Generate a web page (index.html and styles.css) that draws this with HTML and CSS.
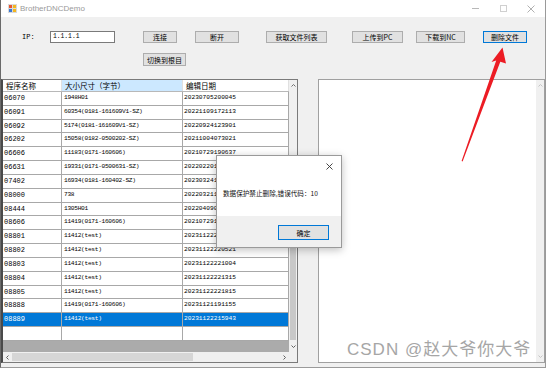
FILE: index.html
```html
<!DOCTYPE html>
<html lang="zh-CN">
<head>
    <meta charset="UTF-8">
    <title>BrotherDNCDemo</title>
    <link rel="stylesheet" href="styles.css">
</head>
<body>
    <div class="window">
        <div class="titlebar">
            <svg class="app-icon" viewBox="0 0 9 9">
                <rect x="0" y="0" width="9" height="9" fill="#d9d9d9"/>
                <rect x="1" y="1" width="3" height="3" fill="#e8542f"/>
                <rect x="5" y="1" width="3" height="3" fill="#f3b61f"/>
                <rect x="1" y="5" width="3" height="3" fill="#3a78d4"/>
                <rect x="5" y="5" width="3" height="3" fill="#f3b61f"/>
            </svg>
            <span class="title">BrotherDNCDemo</span>
            <div class="controls">
                <div class="ctrl"><svg width="7" height="7" viewBox="0 0 7 7"><path d="M0 3.5H7" stroke="#b8b8b8" stroke-width="1"/></svg></div>
                <div class="ctrl"><svg width="7" height="7" viewBox="0 0 7 7"><rect x="0.5" y="0.5" width="6" height="6" fill="none" stroke="#d0d0d0" stroke-width="1"/></svg></div>
                <div class="ctrl"><svg width="8" height="8" viewBox="0 0 8 8"><path d="M0.5 0.5L7.5 7.5M7.5 0.5L0.5 7.5" stroke="#b0b0b0" stroke-width="1"/></svg></div>
            </div>
        </div>

        <div class="client">
            <div class="toolbar">
                <span class="ip-label">IP:</span>
                <div class="ip-input">1.1.1.1</div>
                <button class="btn btn-connect">连接</button>
                <button class="btn btn-disconnect">断开</button>
                <button class="btn btn-list">获取文件列表</button>
                <button class="btn btn-upload">上传到PC</button>
                <button class="btn btn-download">下载到NC</button>
                <button class="btn btn-delete">删除文件</button>
            </div>
            <div class="toolbar toolbar-second">
                <button class="btn btn-root">切换到根目</button>
            </div>

            <div class="main">
                <div class="grid">
                    <div class="grid-area">
                        <div class="grid-header">
                            <div class="hcell">程序名称</div>
                            <div class="hcell hcell-active">大小尺寸（字节）</div>
                            <div class="hcell">编辑日期</div>
                        </div>
                        <div class="grid-row"><div class="c1">06070</div><div class="c2">1948H01</div><div class="c3">20230705200045</div></div>
                        <div class="grid-row"><div class="c1">06091</div><div class="c2">60354(0181-161609V1-SZ)</div><div class="c3">20221109172113</div></div>
                        <div class="grid-row"><div class="c1">06092</div><div class="c2">5174(0181-161609V1-SZ)</div><div class="c3">20220924123901</div></div>
                        <div class="grid-row"><div class="c1">06202</div><div class="c2">15058(0182-0500202-SZ)</div><div class="c3">20211004073021</div></div>
                        <div class="grid-row"><div class="c1">06606</div><div class="c2">11183(0171-160606)</div><div class="c3">20210729190637</div></div>
                        <div class="grid-row"><div class="c1">06631</div><div class="c2">19331(0171-0500631-SZ)</div><div class="c3">20220220183012</div></div>
                        <div class="grid-row"><div class="c1">07402</div><div class="c2">16934(0181-160402-SZ)</div><div class="c3">20230324101522</div></div>
                        <div class="grid-row"><div class="c1">08000</div><div class="c2">738</div><div class="c3">20220321114530</div></div>
                        <div class="grid-row"><div class="c1">08444</div><div class="c2">1305H01</div><div class="c3">20220409093318</div></div>
                        <div class="grid-row"><div class="c1">08606</div><div class="c2">11419(0171-160606)</div><div class="c3">20210729190811</div></div>
                        <div class="grid-row"><div class="c1">08801</div><div class="c2">11412(test)</div><div class="c3">20231122215302</div></div>
                        <div class="grid-row"><div class="c1">08802</div><div class="c2">11412(test)</div><div class="c3">20231122220521</div></div>
                        <div class="grid-row"><div class="c1">08803</div><div class="c2">11412(test)</div><div class="c3">20231122221004</div></div>
                        <div class="grid-row"><div class="c1">08804</div><div class="c2">11412(test)</div><div class="c3">20231122221315</div></div>
                        <div class="grid-row"><div class="c1">08805</div><div class="c2">11412(test)</div><div class="c3">20231122221815</div></div>
                        <div class="grid-row"><div class="c1">08888</div><div class="c2">11419(0171-160606)</div><div class="c3">20231121191155</div></div>
                        <div class="grid-row grid-row-selected"><div class="c1">08889</div><div class="c2">11412(test)</div><div class="c3">20231122215943</div></div>
                        <div class="grid-row"><div class="c1"></div><div class="c2"></div><div class="c3"></div></div>
                        <div class="grid-band"></div>
                    </div>

                    <div class="vscroll">
                        <div class="sarrow sarrow-v"><svg width="5" height="3" viewBox="0 0 5 3"><path d="M0.5 2.5L2.5 0.5L4.5 2.5" stroke="#707070" fill="none"/></svg></div>
                        <div class="vtrack"><div class="vthumb"></div></div>
                        <div class="sarrow sarrow-v sarrow-down"><svg width="5" height="3" viewBox="0 0 5 3"><path d="M0.5 0.5L2.5 2.5L4.5 0.5" stroke="#606060" fill="none"/></svg></div>
                    </div>

                    <div class="hscroll">
                        <div class="sarrow sarrow-h"><svg width="3" height="5" viewBox="0 0 3 5"><path d="M2.5 0.5L0.5 2.5L2.5 4.5" stroke="#606060" fill="none"/></svg></div>
                        <div class="hthumb"></div>
                        <div class="htrack"></div>
                        <div class="sarrow sarrow-h"><svg width="3" height="5" viewBox="0 0 3 5"><path d="M0.5 0.5L2.5 2.5L0.5 4.5" stroke="#606060" fill="none"/></svg></div>
                    </div>
                    <div class="corner"></div>
                </div>

                <div class="textbox">
                    <div class="textbox-scroll">
                        <svg width="5" height="3" viewBox="0 0 5 3"><path d="M0.5 2.5L2.5 0.5L4.5 2.5" stroke="#c4c4c4" fill="none"/></svg>
                        <svg width="5" height="3" viewBox="0 0 5 3"><path d="M0.5 0.5L2.5 2.5L4.5 0.5" stroke="#c4c4c4" fill="none"/></svg>
                    </div>
                </div>
            </div>
        </div>
    </div>

    <div class="dialog">
        <div class="dialog-body">
            <div class="dialog-close"><svg width="7" height="7" viewBox="0 0 7 7"><path d="M0.5 0.5L6.5 6.5M6.5 0.5L0.5 6.5" stroke="#333" stroke-width="0.9"/></svg></div>
            <div class="dialog-msg">数据保护禁止删除,错误代码：10</div>
        </div>
        <div class="dialog-footer">
            <button class="btn btn-ok">确定</button>
        </div>
    </div>

    <svg class="arrow" viewBox="0 0 554 369">
        <polygon points="502.5,47.5 506,63.5 500.3,61.8 462.6,161.5 461.6,161 496.2,60.5 491.5,62" fill="#ec1c24"/>
    </svg>

    <div class="watermark">CSDN @赵大爷你大爷</div>
</body>
</html>
```

FILE: styles.css
```css
body {
    margin: 0;
    width: 554px;
    height: 369px;
    position: relative;
    overflow: hidden;
    background: #ffffff;
    font-family: "Liberation Sans", "Noto Sans CJK SC", sans-serif;
    color: #000;
}

.window {
    width: 546px;
    height: 368px;
    box-sizing: border-box;
    border-left: 1px solid #6a6a6a;
    border-right: 1px solid #9a9a9a;
    border-bottom: 1px solid #9a9a9a;
    background: #f0f0f0;
    display: flex;
    flex-direction: column;
}

/* title bar */
.titlebar {
    height: 17px;
    flex: none;
    background: #ffffff;
    display: flex;
    align-items: center;
}

.app-icon {
    width: 9px;
    height: 9px;
    margin-left: 7px;
}

.title {
    margin-left: 3px;
    font-size: 8px;
    color: #9a9a9a;
}

.controls {
    margin-left: auto;
    display: flex;
}

.ctrl {
    width: 28px;
    height: 17px;
    display: flex;
    align-items: center;
    justify-content: center;
}

/* toolbar */
.client {
    flex: 1;
    display: flex;
    flex-direction: column;
}

.toolbar {
    display: flex;
    align-items: center;
    height: 12px;
    margin-top: 14px;
}

.toolbar-second {
    height: 13px;
    margin-top: 10px;
}

.ip-label {
    width: 28px;
    margin-left: 21px;
    font-size: 7px;
    font-family: "Liberation Mono", monospace;
}

.ip-input {
    width: 65px;
    height: 12px;
    box-sizing: border-box;
    border: 1px solid #7a7a7a;
    background: #fff;
    font-family: "Liberation Mono", monospace;
    font-size: 6.3px;
    line-height: 10px;
    padding-left: 2px;
}

.btn {
    height: 12px;
    box-sizing: border-box;
    padding: 0;
    border: 1px solid #adadad;
    background: #e1e1e1;
    font-family: "Noto Sans CJK SC", sans-serif;
    font-size: 7px;
    line-height: 10px;
    color: #000;
    display: flex;
    align-items: center;
    justify-content: center;
}

.btn-connect { margin-left: 28px; width: 34px; }
.btn-disconnect { margin-left: 18px; width: 44px; }
.btn-list { margin-left: 27px; width: 61px; }
.btn-upload { margin-left: 25px; width: 51px; }
.btn-download { margin-left: 13px; width: 49px; }
.btn-delete { margin-left: 18px; width: 44px; border-color: #0078d7; }
.btn-root { margin-left: 142px; width: 43px; height: 13px; }

/* main area */
.main {
    display: flex;
    height: 284px;
    margin-top: 13px;
}

.grid {
    width: 297px;
    height: 284px;
    box-sizing: border-box;
    border-left: 2px solid #4a4a4a;
    border-top: 1px solid #7a7a7a;
    border-right: 1px solid #7a7a7a;
    border-bottom: 1px solid #7a7a7a;
    display: grid;
    grid-template-columns: 286px 8px;
    grid-template-rows: 272px 10px;
    background: #fff;
}

.grid-area {
    display: flex;
    flex-direction: column;
}

.grid-header,
.grid-row {
    display: grid;
    grid-template-columns: 59px 121px 106px;
    flex: none;
}

.grid-header {
    height: 12px;
    box-sizing: border-box;
    border-bottom: 1px solid #b8b8b8;
}

.hcell {
    font-family: "Noto Sans CJK SC", sans-serif;
    font-size: 7.5px;
    line-height: 11px;
    padding-left: 3px;
    border-right: 1px solid #e0e0e0;
    background: #fff;
    white-space: nowrap;
}

.hcell-active {
    background: #cce8ff;
}

.grid-row {
    height: 13.83px;
    box-sizing: border-box;
    border-bottom: 1px solid #a8a8a8;
    background: #fff;
}

.grid-row > div {
    border-right: 1px solid #a8a8a8;
    font-family: "Liberation Mono", monospace;
    font-size: 6.2px;
    line-height: 12.8px;
    white-space: nowrap;
    overflow: hidden;
}

.grid-row .c1 {
    font-size: 7px;
    padding-left: 1px;
}

.grid-row .c2 {
    padding-left: 2px;
    letter-spacing: -0.3px;
}

.grid-row .c3 {
    padding-left: 1px;
}

.grid-row-selected {
    background: #0078d7;
    color: #fff;
}

.grid-band {
    flex: 1;
    background: #ababab;
}

/* scrollbars */
.vscroll {
    display: flex;
    flex-direction: column;
    background: #f0f0f0;
}

.sarrow {
    display: flex;
    align-items: center;
    justify-content: center;
    flex: none;
}

.sarrow-v {
    height: 10px;
}

.sarrow-down {
    height: 11px;
}

.vtrack {
    flex: 1;
    display: flex;
    flex-direction: column;
    padding: 75px 0 1px;
}

.vthumb {
    flex: 1;
    margin: 0 1px;
    background: #c8c8c8;
}

.hscroll {
    display: flex;
    background: #f0f0f0;
}

.sarrow-h {
    width: 9px;
}

.hthumb {
    width: 181px;
    margin: 1px 0;
    background: #d6d6d6;
}

.htrack {
    flex: 1;
}

.corner {
    background: #f0f0f0;
}

.textbox {
    width: 227px;
    height: 284px;
    margin-left: 20px;
    box-sizing: border-box;
    border: 1px solid #a0a0a0;
    background: #fff;
    display: flex;
    justify-content: flex-end;
}

.textbox-scroll {
    width: 8px;
    background: #f0f0f0;
    display: flex;
    flex-direction: column;
    align-items: center;
    justify-content: space-between;
    padding: 4px 0;
}

/* message box */
.dialog {
    position: absolute;
    left: 216px;
    top: 155px;
    width: 126px;
    height: 93px;
    box-sizing: border-box;
    border: 1px solid #9a9a9a;
    background: #fff;
    box-shadow: 0 2px 8px rgba(0, 0, 0, 0.25);
    display: flex;
    flex-direction: column;
}

.dialog-body {
    height: 60px;
    display: flex;
    flex-direction: column;
}

.dialog-close {
    align-self: flex-end;
    width: 14px;
    height: 14px;
    margin: 3px 5px 0 0;
    display: flex;
    align-items: center;
    justify-content: center;
}

.dialog-msg {
    margin-top: 16px;
    padding-left: 6px;
    font-family: "Noto Sans CJK SC", sans-serif;
    font-size: 6.6px;
    line-height: 9px;
    color: #111;
    white-space: nowrap;
}

.dialog-footer {
    flex: 1;
    background: #f0f0f0;
    display: flex;
    justify-content: flex-end;
    align-items: flex-start;
    padding: 9px 12px 0 0;
}

.btn-ok {
    width: 51px;
    height: 15px;
    border-color: #0078d7;
}

/* annotations */
.arrow {
    position: absolute;
    left: 0;
    top: 0;
    width: 554px;
    height: 369px;
    pointer-events: none;
}

.watermark {
    position: absolute;
    left: 347px;
    top: 341px;
    font-family: "Liberation Sans", "Noto Sans CJK SC", sans-serif;
    font-size: 17px;
    line-height: 17px;
    letter-spacing: 1px;
    color: #a6a6a6;
    text-shadow: 0 0 1px #fff;
    white-space: nowrap;
}
```
